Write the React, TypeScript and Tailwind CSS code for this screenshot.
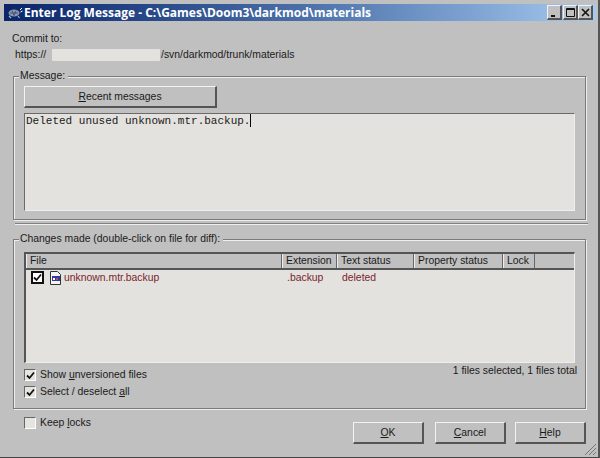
const ui = { fontFamily: '"Liberation Sans", Arial, sans-serif' };
const titleFont = { fontFamily: '"Open Sans", sans-serif' };

const raised =
  'bg-[#c0c0c0] border-t border-l border-t-[#f2f2f2] border-l-[#f2f2f2] border-r-2 border-b-2 border-r-[#555555] border-b-[#555555]';

function TitleButton({ children }: { children: React.ReactNode }) {
  return (
    <div className={`${raised} flex h-[15px] w-[15px] items-center justify-center`}>
      <svg width="11" height="11" viewBox="0 0 11 11" fill="none" stroke="#111">
        {children}
      </svg>
    </div>
  );
}

function Check({ checked, label }: { checked?: boolean; label: React.ReactNode }) {
  return (
    <div className="flex h-[12px] items-center gap-[4px]">
      <div className="flex h-[12px] w-[12px] items-center justify-center border-t border-l border-t-[#666666] border-l-[#666666] border-r border-b border-r-white border-b-white bg-[#e6e4e0]">
        {checked && (
          <svg width="9" height="9" viewBox="0 0 9 9" fill="none" stroke="#111" strokeWidth="1.8">
            <path d="M1 4.5 L3.5 7 L8 1.5" />
          </svg>
        )}
      </div>
      <span>{label}</span>
    </div>
  );
}

function DlgButton({ children }: { children: React.ReactNode }) {
  return (
    <div className={`${raised} flex h-[22px] w-[71px] items-center justify-center`}>
      <span>{children}</span>
    </div>
  );
}

function Group({ title, className, children }: { title: string; className: string; children: React.ReactNode }) {
  return (
    <fieldset className={`mx-[13px] w-[573px] border border-[#7a7a7a] px-[10px] shadow-[inset_1px_1px_0_#eeeeee,1px_1px_0_#eeeeee] ${className}`}>
      <legend className="ml-[-5px] bg-[#c0c0c0] pr-[3px] pl-[1px] leading-[14px]">{title}</legend>
      {children}
    </fieldset>
  );
}

const columns = [
  { label: 'File', width: 'w-[256px]' },
  { label: 'Extension', width: 'w-[55px]' },
  { label: 'Text status', width: 'w-[77px]' },
  { label: 'Property status', width: 'w-[89px]' },
  { label: 'Lock', width: 'w-[32px]' },
];

export default function App() {
  return (
    <div
      style={ui}
      className="relative flex h-[458px] w-[600px] flex-col overflow-hidden border-r-2 border-b border-r-[#555555] border-b-[#444444] bg-[#c0c0c0] pt-[4px] text-[10.4px] text-[#1a1a1a]"
    >
      {/* title bar */}
      <div className="mx-[4px] flex h-[17px] w-[592px] shrink-0 items-center bg-gradient-to-r from-[#0a246a] via-[#4a6fa8] to-[#a6caf0] pr-[3px] pl-[3px]">
        <svg width="16" height="12" viewBox="0 0 16 12" className="shrink-0">
          <ellipse cx="7" cy="6" rx="5.5" ry="3.5" fill="#8a97ad" />
          <path d="M3 6 H11 M5 3.5 L7 8.5 M9 3.5 L7 8.5" stroke="#3a4766" strokeWidth="0.8" />
          <path d="M2 9 L4 11 M11 9 L12.5 11" stroke="#aab4c6" strokeWidth="1.2" />
          <path d="M13 3 L15 1 M13.5 5 L15.5 4" stroke="#ffffff" strokeWidth="1" />
        </svg>
        <span style={titleFont} className="ml-[1px] text-[12px] leading-none font-bold whitespace-nowrap text-white">
          Enter Log Message - C:\Games\Doom3\darkmod\materials
        </span>
        <div className="ml-auto flex items-center">
          <TitleButton>
            <path d="M2 9 H6" strokeWidth="2" />
          </TitleButton>
          <div className="ml-[1px]">
            <TitleButton>
              <path d="M1.5 1.5 H9.5 V9.5 H1.5 Z M1.5 2.5 H9.5" />
            </TitleButton>
          </div>
          <TitleButton>
            <path d="M2 2 L9 9 M9 2 L2 9" strokeWidth="1.6" />
          </TitleButton>
        </div>
      </div>

      <div className="mt-[11px] ml-[12px] leading-[14px]">Commit to:</div>
      <div className="mt-[2px] ml-[15px] flex items-center leading-[14px]">
        <span className="w-[37px]">https://</span>
        <div className="mr-[1px] h-[12px] w-[108px] rounded-[1px] bg-[#e4e2de] blur-[0.6px]" />
        <span>/svn/darkmod/trunk/materials</span>
      </div>

      {/* message group */}
      <Group title="Message:" className="mt-[7px] h-[151px]">
        <div className={`${raised} mt-[3px] flex h-[22px] w-[193px] items-center justify-center`}>
          <span>
            <u>R</u>ecent messages
          </span>
        </div>
        <div
          style={{ fontFamily: '"Liberation Mono", monospace' }}
          className="mt-[5px] h-[98px] w-[551px] border-t border-l border-t-[#6a6a6a] border-l-[#6a6a6a] border-r border-b border-r-[#eeeeee] border-b-[#eeeeee] bg-[#e4e2de] px-[1px] text-[11px] leading-[14px]"
        >
          Deleted unused unknown.mtr.backup.
          <span className="inline-block h-[13px] w-px align-text-bottom bg-black" />
        </div>
      </Group>

      {/* divider */}
      <div className="mt-[3px] ml-[15px] h-[2px] w-[573px] border-t border-b border-t-[#808080] border-b-[#eeeeee]" />

      {/* changes group */}
      <Group title="Changes made (double-click on file for diff):" className="mt-[7px] h-[177px]">
        <div className="mt-[6px] flex h-[111px] w-[551px] flex-col border-t-2 border-l-2 border-t-[#555555] border-l-[#555555] border-r border-b border-r-[#eeeeee] border-b-[#eeeeee] bg-[#e4e2de]">
          <div className="flex h-[16px] shrink-0 border-b-2 border-b-[#555555] bg-[#c0c0c0] leading-[14px]">
            {columns.map((col) => (
              <div
                key={col.label}
                className={`${col.width} shrink-0 border-l border-l-[#eeeeee] border-r border-r-[#666666] pl-[3px] whitespace-nowrap`}
              >
                {col.label}
              </div>
            ))}
          </div>
          <div className="flex h-[15px] items-center text-[#7a1f2e]">
            <div className="flex w-[256px] shrink-0 items-center pl-[5px]">
              <div className="flex h-[13px] w-[13px] items-center justify-center border-2 border-[#111111] bg-white">
                <svg width="9" height="9" viewBox="0 0 9 9" fill="none" stroke="#111" strokeWidth="1.8">
                  <path d="M1 4.5 L3.5 7 L8 1.5" />
                </svg>
              </div>
              <svg width="13" height="14" viewBox="0 0 13 14" className="ml-[5px] shrink-0">
                <path d="M1.5 0.5 H8.5 L11.5 3.5 V13.5 H1.5 Z" fill="#f4f4f4" stroke="#333" />
                <rect x="3" y="5" width="8" height="5" fill="#2c3f9e" />
                <rect x="4" y="7" width="2" height="2" fill="#fff" />
                <rect x="7" y="7" width="2" height="2" fill="#e23a3a" />
              </svg>
              <span className="ml-[2px]">unknown.mtr.backup</span>
            </div>
            <div className="w-[55px] shrink-0 pl-[5px]">.backup</div>
            <div className="w-[77px] shrink-0 pl-[5px]">deleted</div>
          </div>
        </div>
        <div className="relative mt-[6px] flex flex-col gap-[5px]">
          <Check
            checked
            label={
              <>
                Show <u>u</u>nversioned files
              </>
            }
          />
          <Check
            checked
            label={
              <>
                Select / deselect <u>a</u>ll
              </>
            }
          />
          <div className="absolute top-[-5px] right-[-2px] leading-[14px]">1 files selected, 1 files total</div>
        </div>
      </Group>

      {/* footer */}
      <div className="mt-[8px] mr-[12px] ml-[24px] flex items-start">
        <Check
          label={
            <>
              Keep <u>l</u>ocks
            </>
          }
        />
        <div className="mt-[5px] ml-auto flex">
          <DlgButton>
            <u>O</u>K
          </DlgButton>
          <div className="ml-[11px]">
            <DlgButton>
              <u>C</u>ancel
            </DlgButton>
          </div>
          <div className="ml-[9px]">
            <DlgButton>
              <u>H</u>elp
            </DlgButton>
          </div>
        </div>
      </div>

      {/* resize grip */}
      <svg width="12" height="12" viewBox="0 0 12 12" className="absolute right-[2px] bottom-[2px]" stroke="#777">
        <path d="M1 12 L12 1 M5 12 L12 5 M9 12 L12 9" />
      </svg>
    </div>
  );
}
